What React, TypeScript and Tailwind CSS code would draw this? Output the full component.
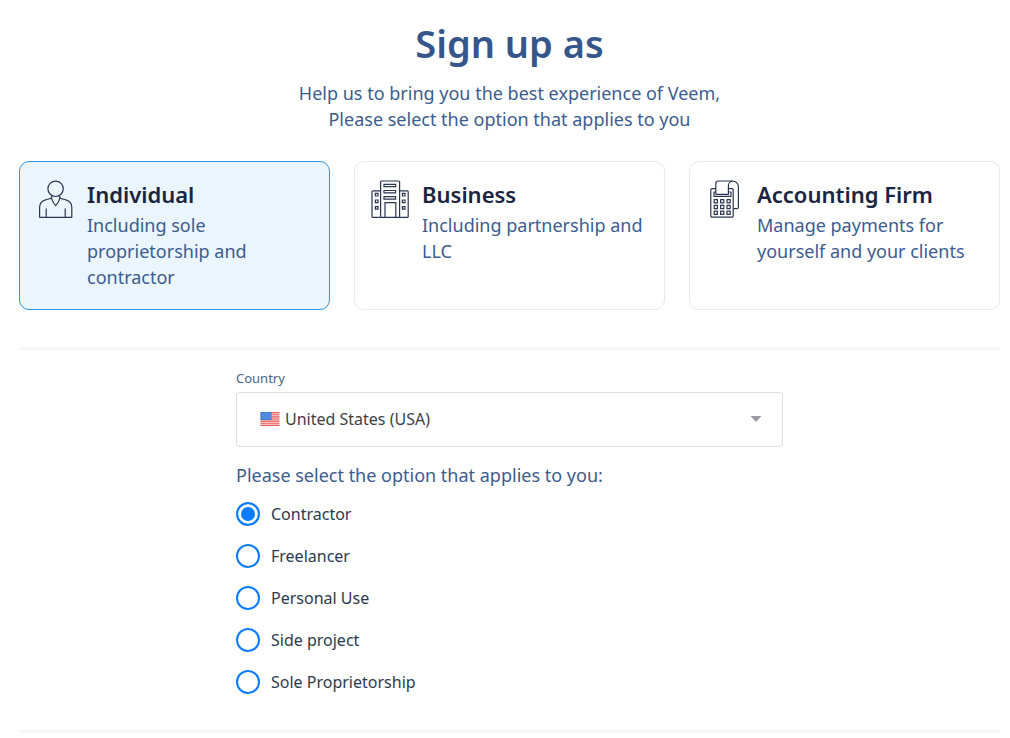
import React, { useState } from 'react';

interface AccountType {
  id: string;
  title: string;
  description: string;
  icon: React.ReactNode;
}

const IndividualIcon = () => (
  <svg viewBox="0 0 40 40" fill="none" stroke="currentColor" strokeWidth="1.2" strokeLinejoin="round" className="h-10 w-10 shrink-0" aria-hidden="true">
    <circle cx="19.6" cy="8.8" r="7.7" />
    <path d="M3.6 37.4V27.2c0-4.2 2.4-6.4 6-7.4 2.6-.7 5.4-1 5.9-1.9.2-.5.2-1.2.2-2M35.8 37.4V27.2c0-4.2-2.4-6.4-6-7.4-2.6-.7-5.4-1-5.9-1.9-.2-.5-.2-1.2-.2-2M3.6 37.4h32.2" />
    <path d="M15.4 17.8c.8 3 2.2 5.6 4.3 7.8 2.1-2.2 3.5-4.8 4.3-7.8M10.2 28.5v8.9M29.2 28.5v8.9" />
  </svg>
);

const BusinessIcon = () => (
  <svg viewBox="0 0 40 40" fill="none" stroke="currentColor" strokeWidth="1.2" className="h-10 w-10 shrink-0" aria-hidden="true">
    <rect x="9.6" y="1" width="19" height="36.4" rx="1" />
    <path d="M9.6 10.8H2a1 1 0 0 0-1 1v24.6a1 1 0 0 0 1 1h7.6M28.6 10.8h7.6a1 1 0 0 1 1 1v24.6a1 1 0 0 1-1 1h-7.6" />
    <path d="M13 4.3h11.6v2.4H13zM13 10.5h11.6v2.4H13zM13 16.7h11.6v2.4H13zM14 37.4V22.6h10.8v14.8" />
    <path d="M4.4 13.4H7V16H4.4zM4.4 20H7v2.6H4.4zM4.4 26.6H7v2.6H4.4zM31.4 13.4H34V16h-2.6zM31.4 20H34v2.6h-2.6zM31.4 26.6H34v2.6h-2.6z" />
  </svg>
);

const AccountingIcon = () => (
  <svg viewBox="0 0 40 40" fill="none" stroke="currentColor" strokeWidth="1.2" strokeLinejoin="round" className="h-10 w-10 shrink-0" aria-hidden="true">
    <path d="M9.8 8.6H6.2a1.4 1.4 0 0 0-1.4 1.4v25.8a1.4 1.4 0 0 0 1.4 1.4h19.6a1.4 1.4 0 0 0 1.4-1.4V10a1.4 1.4 0 0 0-1.4-1.4h-3" />
    <path d="M9.8 14.4V3.4A2.4 2.4 0 0 1 12.2 1h14.4a5.8 5.8 0 0 1 5.8 5.8v20.4a1.4 1.4 0 0 1-1.4 1.4h-3.8" />
    <path d="M26.6 1a4.6 4.6 0 0 0-4.2 4.8v8.6H9.8" />
    <path d="M9.8 12H8v4.4h17V12h-2.6" />
    <path d="M8.2 19.6h3.2v3.2H8.2zM14.6 19.6h3.2v3.2h-3.2zM21 19.6h3.2v3.2H21zM8.2 25.4h3.2v3.2H8.2zM14.6 25.4h3.2v3.2h-3.2zM21 25.4h3.2v3.2H21zM8.2 31.2h3.2v3.2H8.2zM14.6 31.2h3.2v3.2h-3.2zM21 31.2h3.2v3.2H21z" />
  </svg>
);

const FlagIcon = () => (
  <svg viewBox="0 0 19 14" className="h-3.5 w-5" aria-hidden="true">
    <path fill="#f6dfe0" d="M0 0h19v14H0z" />
    <path stroke="#ee5a5a" strokeWidth="1.1" d="M0 .6h19M0 2.8h19M0 4.9h19M0 7h19M0 9.1h19M0 11.3h19M0 13.4h19" />
    <path fill="#3f7fdc" d="M0 0h11v8H0z" />
    <path stroke="#a9ccf5" strokeWidth=".8" strokeDasharray="1 1.4" d="M1.4 2h9M2.4 4h8M1.4 6h9" />
  </svg>
);

const accountTypes: AccountType[] = [
  {
    id: 'individual',
    title: 'Individual',
    description: 'Including sole proprietorship and contractor',
    icon: <IndividualIcon />,
  },
  {
    id: 'business',
    title: 'Business',
    description: 'Including partnership and LLC',
    icon: <BusinessIcon />,
  },
  {
    id: 'accounting',
    title: 'Accounting Firm',
    description: 'Manage payments for yourself and your clients',
    icon: <AccountingIcon />,
  },
];

const options = ['Contractor', 'Freelancer', 'Personal Use', 'Side project', 'Sole Proprietorship'];

const App: React.FC = () => {
  const [accountType, setAccountType] = useState('individual');
  const [option, setOption] = useState('Contractor');

  return (
    <main className="bg-white pt-[18px] pr-2.5 pb-1 pl-[19px] font-['Noto_Sans',sans-serif] text-[#3c5c8e]">
      <header className="text-center">
        <h1 className="text-[38px] leading-[50px] font-semibold text-[#34568a]">Sign up as</h1>
        <p className="mt-3 text-lg leading-[26px]">
          Help us to bring you the best experience of Veem,
          <br />
          Please select the option that applies to you
        </p>
      </header>

      {/* Account types */}
      <div className="mt-[29px] grid grid-cols-3 gap-6">
        {accountTypes.map((type) => (
          <button
            key={type.id}
            type="button"
            aria-pressed={accountType === type.id}
            onClick={() => setAccountType(type.id)}
            className={`flex items-start gap-[11px] rounded-[10px] border pt-[18px] pr-2 pb-[19px] pl-4 text-left ${
              accountType === type.id ? 'border-[#2f93e6] bg-[#eaf5fd]' : 'border-[#e6e8f0] bg-white'
            }`}
          >
            <span className="text-[#2b3550]">{type.icon}</span>
            <span className="min-w-0 flex-1">
              <span className="block pb-1 text-[22px] leading-7 font-semibold text-[#1b2440]">{type.title}</span>
              <span className="block text-lg leading-[26px]">{type.description}</span>
            </span>
          </button>
        ))}
      </div>

      <hr className="mt-[37px] border-t-3 border-[#f7f7f8]" />

      <form className="mx-auto mt-[18px] w-full max-w-[547px]">
        <label htmlFor="country" className="block text-[13px] leading-5 text-[#4a6387]">
          Country
        </label>
        <div className="relative mt-1">
          <span className="pointer-events-none absolute inset-y-0 left-6 flex items-center pb-0.5">
            <FlagIcon />
          </span>
          <select
            id="country"
            defaultValue="us"
            className="block h-[55px] w-full appearance-none rounded-[3px] border border-[#dfdfe1] bg-white pr-12 pb-0.5 pl-12 text-base text-[#3b3f47]"
          >
            <option value="us">United States (USA)</option>
          </select>
          <svg viewBox="0 0 12 6" className="pointer-events-none absolute top-6 right-[21px] h-1.5 w-3" aria-hidden="true">
            <path fill="#9b9ba3" d="M.5 0h11L6 6z" />
          </svg>
        </div>

        <fieldset className="mt-[14px]">
          <legend className="text-lg leading-7">Please select the option that applies to you:</legend>
          <div className="mt-[13px] flex flex-col gap-[18px]">
            {options.map((name) => (
              <label key={name} className="flex items-center gap-[11px] text-base leading-6 text-[#2b3a4f]">
                <input
                  type="radio"
                  name="option"
                  value={name}
                  checked={option === name}
                  onChange={() => setOption(name)}
                  className="h-6 w-6 shrink-0 appearance-none rounded-full border-2 border-[#0a7cff] bg-white checked:bg-[#0a7cff] checked:shadow-[inset_0_0_0_3px_white]"
                />
                {name}
              </label>
            ))}
          </div>
        </fieldset>
      </form>

      <hr className="mt-9 border-t-3 border-[#f7f7f8]" />
    </main>
  );
};

export default App;
